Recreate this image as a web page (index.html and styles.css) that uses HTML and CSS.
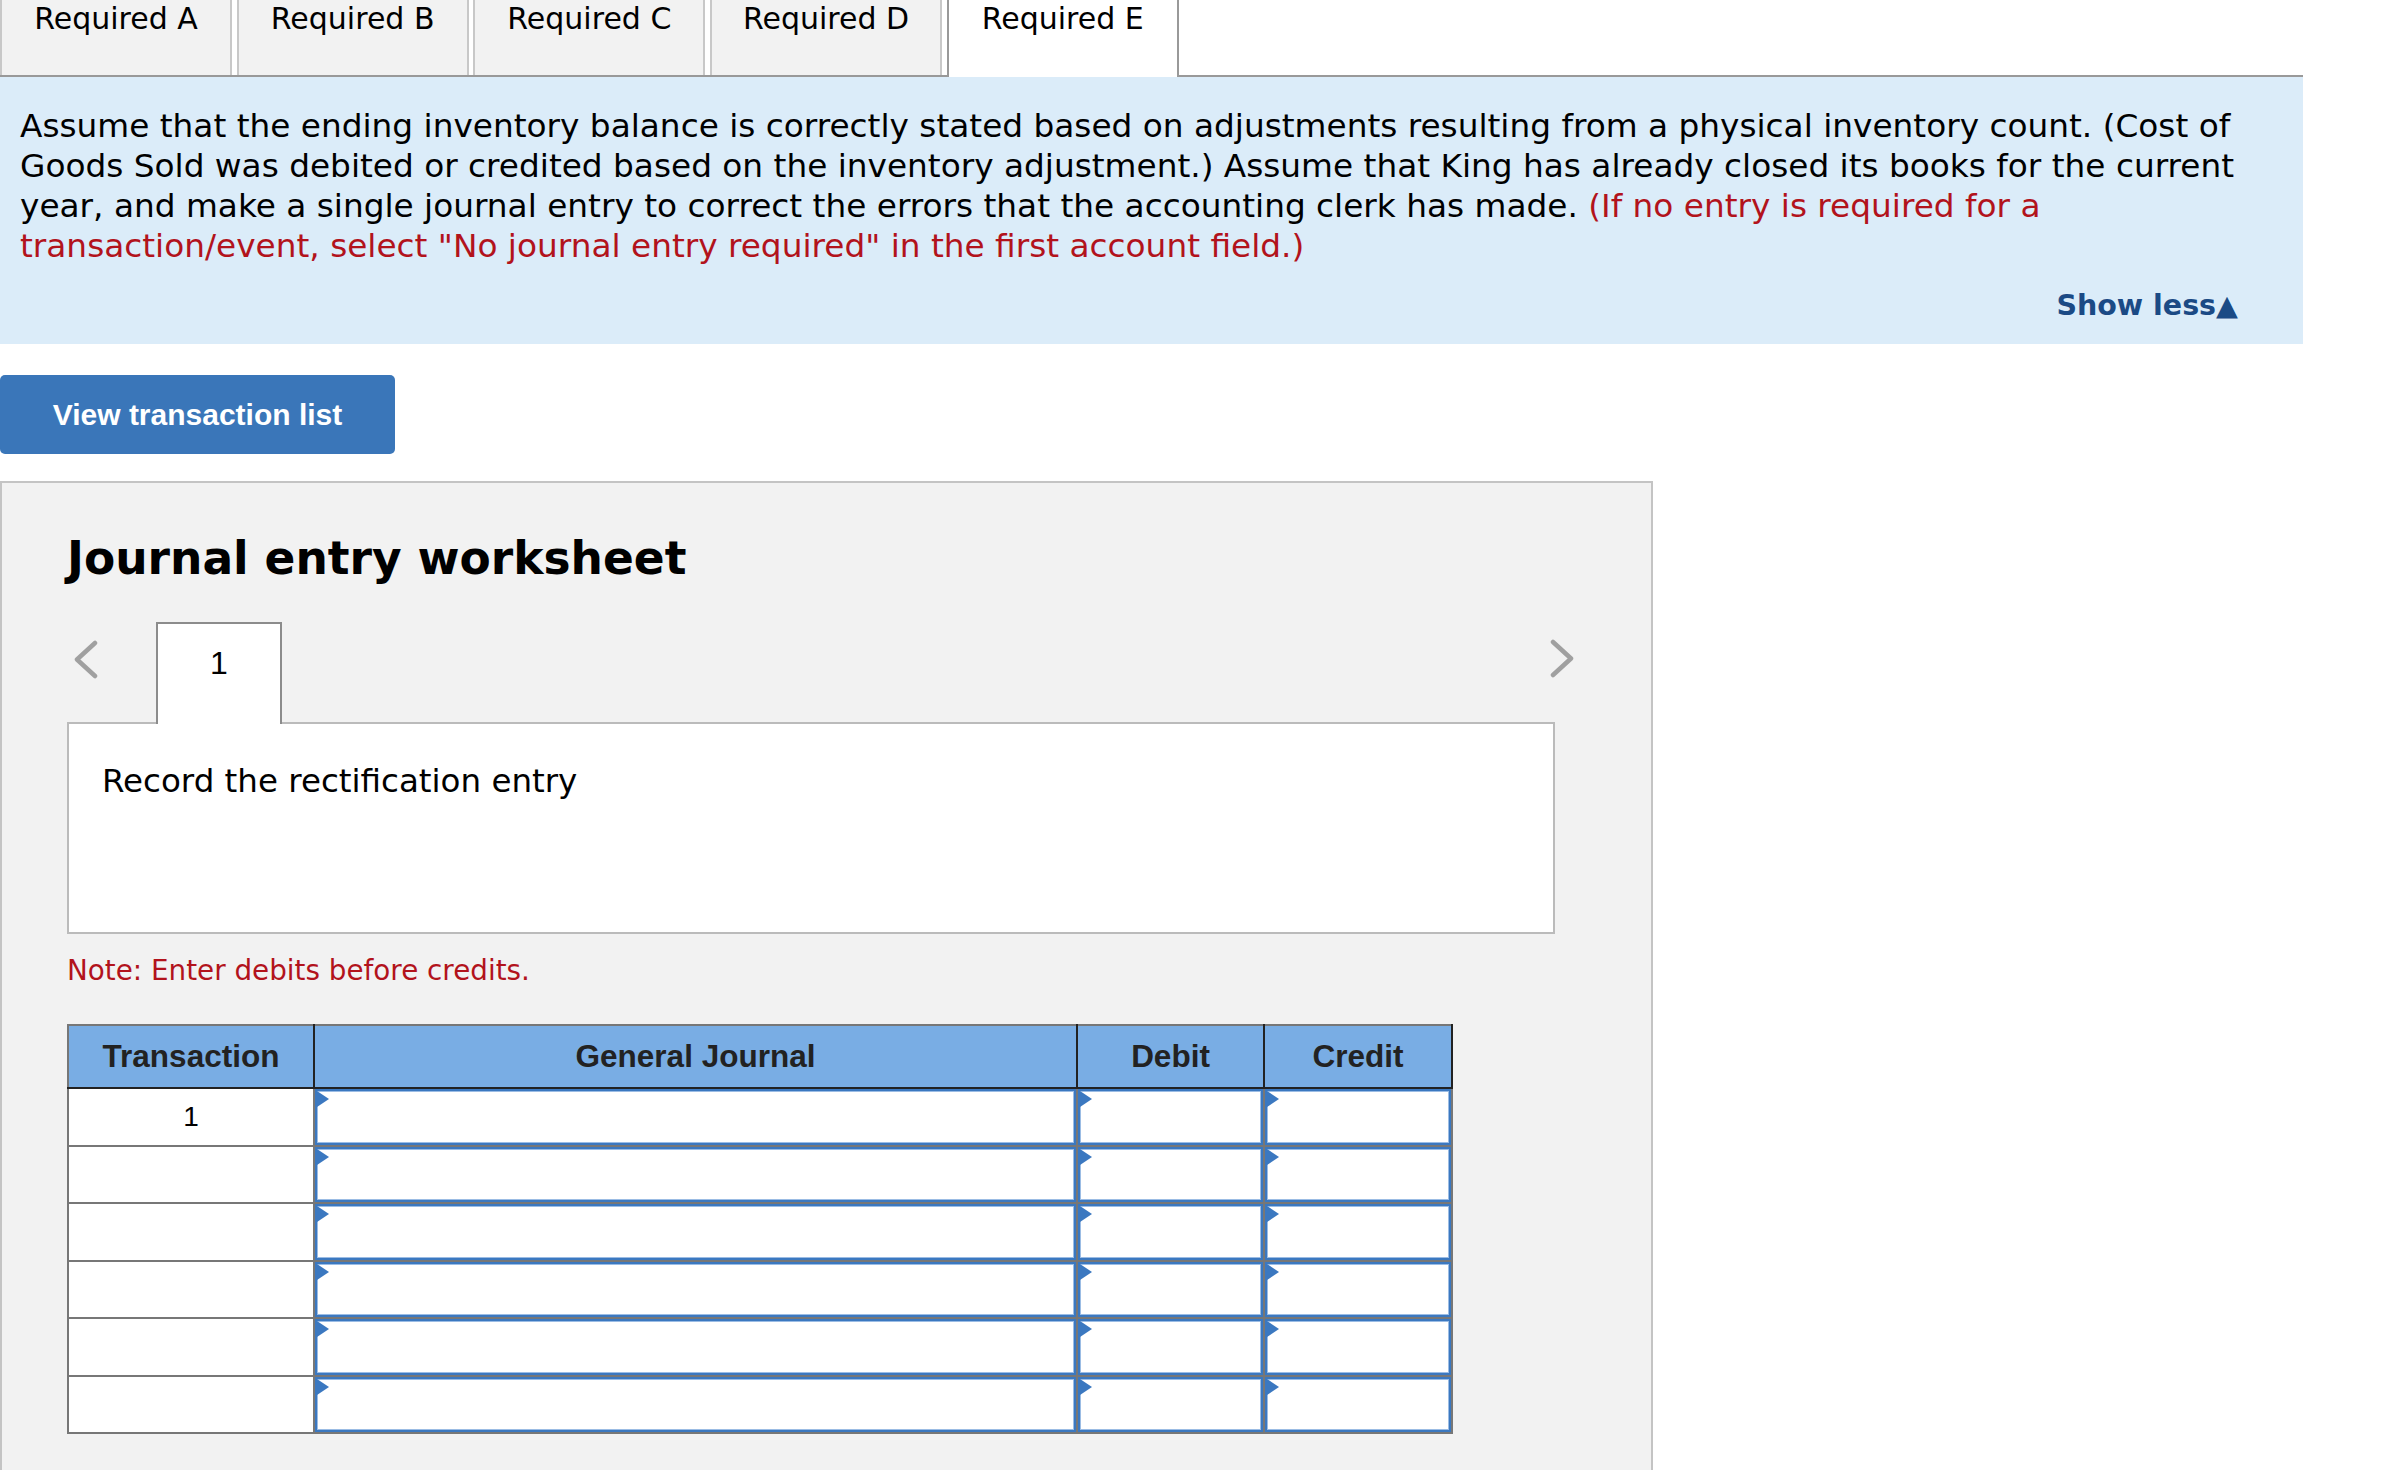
FILE: index.html
```html
<!DOCTYPE html>
<html lang="en">
<head>
  <meta charset="UTF-8">
  <title>Journal entry worksheet</title>
  <link rel="stylesheet" href="styles.css">
</head>
<body>
  <div class="tabs">
    <div class="tab">Required A</div>
    <div class="tab">Required B</div>
    <div class="tab">Required C</div>
    <div class="tab">Required D</div>
    <div class="tab active">Required E</div>
  </div>

  <div class="question">
    <p class="question-text">Assume that the ending inventory balance is correctly stated based on adjustments resulting from a physical inventory count. (Cost of Goods Sold was debited or credited based on the inventory adjustment.) Assume that King has already closed its books for the current year, and make a single journal entry to correct the errors that the accounting clerk has made. <span class="hint">(If no entry is required for a transaction/event, select "No journal entry required" in the first account field.)</span></p>
    <div class="toggle"><a class="show-less">Show less&#9650;</a></div>
  </div>

  <button class="view-btn">View transaction list</button>

  <div class="worksheet">
    <h2 class="ws-title">Journal entry worksheet</h2>

    <div class="ws-nav">
      <button class="arrow prev">
        <svg width="24" height="42" viewBox="0 0 24 42"><polyline points="21,4 3,20.5 21,37" /></svg>
      </button>
      <div class="ws-tab">1</div>
      <button class="arrow next">
        <svg width="24" height="42" viewBox="0 0 24 42"><polyline points="3,4 21,20.5 3,37" /></svg>
      </button>
    </div>

    <div class="ws-box">Record the rectification entry</div>

    <p class="note">Note: Enter debits before credits.</p>

    <table class="journal">
      <colgroup>
        <col class="c-trans">
        <col class="c-account">
        <col class="c-debit">
        <col class="c-credit">
      </colgroup>
      <thead>
        <tr>
          <th>Transaction</th>
          <th>General Journal</th>
          <th>Debit</th>
          <th>Credit</th>
        </tr>
      </thead>
      <tbody>
        <tr>
          <td class="trans">1</td>
          <td><div class="field"></div></td>
          <td><div class="field"></div></td>
          <td><div class="field"></div></td>
        </tr>
        <tr>
          <td class="trans"></td>
          <td><div class="field"></div></td>
          <td><div class="field"></div></td>
          <td><div class="field"></div></td>
        </tr>
        <tr>
          <td class="trans"></td>
          <td><div class="field"></div></td>
          <td><div class="field"></div></td>
          <td><div class="field"></div></td>
        </tr>
        <tr>
          <td class="trans"></td>
          <td><div class="field"></div></td>
          <td><div class="field"></div></td>
          <td><div class="field"></div></td>
        </tr>
        <tr>
          <td class="trans"></td>
          <td><div class="field"></div></td>
          <td><div class="field"></div></td>
          <td><div class="field"></div></td>
        </tr>
        <tr>
          <td class="trans"></td>
          <td><div class="field"></div></td>
          <td><div class="field"></div></td>
          <td><div class="field"></div></td>
        </tr>
      </tbody>
    </table>
  </div>
</body>
</html>
```

FILE: styles.css
```css
body {
  margin: 0;
  padding: 0;
  background-color: white;
  font-family: "DejaVu Sans", Verdana, sans-serif;
  color: #000;
}

/* top tabs */
.tabs {
  display: flex;
  align-items: flex-start;
  gap: 4.7px;
  width: 2303px;
  height: 75px;
  border-bottom: 2px solid #999;
}

.tab {
  box-sizing: border-box;
  width: 232px;
  height: 75px;
  border-left: 2px solid #c8c8c8;
  border-right: 2px solid #c8c8c8;
  background-color: #f2f2f2;
  font-size: 30px;
  line-height: 38px;
  text-align: center;
}

.tab.active {
  height: 77px;
  border-color: #999;
  background-color: white;
}

/* question panel */
.question {
  width: 2303px;
  box-sizing: border-box;
  padding: 29px 30px 18px 20px;
  background-color: #dbecf9;
}

.question-text {
  margin: 0;
  font-size: 32.75px;
  line-height: 40px;
}

.hint {
  color: #b2131c;
}

.toggle {
  margin: 20px 35px 0 0;
  text-align: right;
  font-size: 28.5px;
  line-height: 40px;
}

.show-less {
  font-weight: bold;
  color: #1b4a85;
  cursor: pointer;
}

.view-btn {
  display: block;
  width: 395px;
  height: 79px;
  margin: 31px 0 27px 0;
  padding: 0;
  border: none;
  border-radius: 5px;
  background-color: #3a76b9;
  color: white;
  font-family: "Liberation Sans", Arial, sans-serif;
  font-size: 30px;
  font-weight: bold;
  cursor: pointer;
}

/* worksheet */
.worksheet {
  box-sizing: border-box;
  width: 1653px;
  padding: 48px 0 80px 65px;
  border: 2px solid #c4c4c4;
  background-color: #f2f2f2;
}

.ws-title {
  margin: 0;
  font-size: 45.5px;
  line-height: 56px;
  font-weight: bold;
}

.ws-nav {
  display: flex;
  align-items: flex-start;
  width: 1507px;
  margin-top: 35px;
}

.arrow {
  padding: 0;
  border: none;
  background: none;
  cursor: pointer;
}

.arrow svg {
  display: block;
}

.arrow polyline {
  fill: none;
  stroke: #a0a0a0;
  stroke-width: 4.5;
  stroke-linecap: round;
  stroke-linejoin: round;
}

.arrow.prev {
  margin: 17px 0 0 7px;
}

.arrow.next {
  margin: 16px 0 0 auto;
}

.ws-tab {
  position: relative;
  z-index: 1;
  box-sizing: border-box;
  width: 126px;
  height: 102px;
  margin: 0 0 -2px 58px;
  padding-top: 19px;
  border: 2px solid #8c8c8c;
  border-bottom: none;
  background-color: white;
  font-family: "Liberation Sans", Arial, sans-serif;
  font-size: 32px;
  line-height: 40px;
  text-align: center;
}

.ws-box {
  box-sizing: border-box;
  width: 1488px;
  height: 212px;
  padding: 37px 33px;
  border: 2px solid #bbb;
  background-color: white;
  font-size: 32.5px;
  line-height: 40px;
}

.note {
  margin: 20px 0 36px 0;
  color: #b2131c;
  font-size: 27.8px;
  line-height: 34px;
}

/* journal table */
.journal {
  width: 1384px;
  table-layout: fixed;
  border-collapse: collapse;
  font-family: "Liberation Sans", Arial, sans-serif;
}

.c-trans { width: 246px; }
.c-account { width: 763px; }
.c-debit { width: 187px; }
.c-credit { width: 188px; }

.journal th {
  height: 61px;
  padding: 0;
  border: 2px solid #222;
  border-top-color: #777;
  background-color: #79ade4;
  color: #222;
  font-size: 31.5px;
  font-weight: bold;
}

.journal th:first-child {
  border-left-color: #777;
}

.journal td {
  padding: 0;
  border: 2px solid #777;
  background-color: white;
}

.journal td.trans {
  height: 55.5px;
  font-size: 28px;
  text-align: center;
}

.field {
  position: relative;
  box-sizing: border-box;
  height: 55.5px;
  border: 2px solid #3b78c0;
  box-shadow: inset 0 0 0 1px #9bbce4;
}

/* small marker in the corner of each entry field */
.field::before {
  content: "";
  position: absolute;
  top: 0;
  left: 0;
  border-left: 12px solid #3b78c0;
  border-top: 8px solid transparent;
  border-bottom: 8px solid transparent;
}
```
